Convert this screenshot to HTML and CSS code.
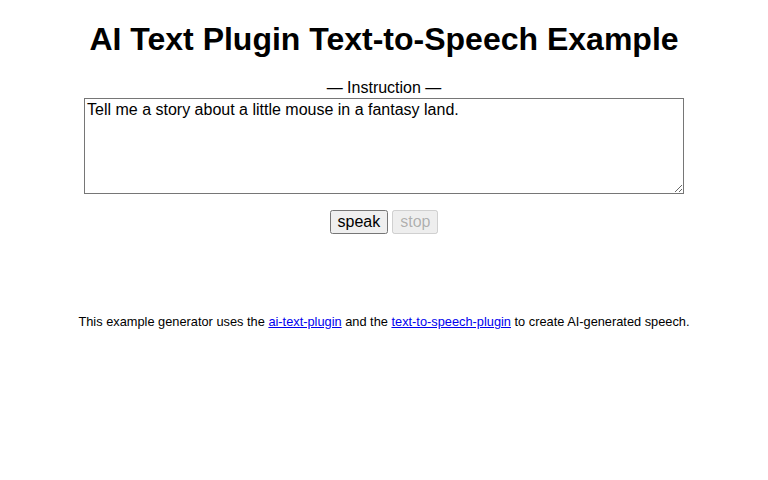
FILE: index.html
```html
<!doctype html>
<html lang="en">
<head>
	<meta charset="UTF-8">
	<title>AI Text Plugin Text-to-Speech Example</title>
	<link rel="stylesheet" href="styles.css">
</head>
<body>
	<h1 class="title">AI Text Plugin Text-to-Speech Example</h1>
	<div class="instruction">
		<div class="label">— Instruction —</div>
		<textarea id="instruction">Tell me a story about a little mouse in a fantasy land.</textarea>
	</div>
	<div class="buttons">
		<button id="speak">speak</button>
		<button id="stop" disabled>stop</button>
	</div>
	<p class="note">This example generator uses the <a href="#">ai-text-plugin</a> and the <a href="#">text-to-speech-plugin</a> to create AI-generated speech.</p>
</body>
</html>
```
FILE: styles.css
```css
body {
  font-family: "Liberation Sans", Arial, sans-serif;
  text-align: center;
  color: #000;
  background: #fff;
  margin: 0 8px;
}

h1.title {
  font-size: 32px;
  font-weight: bold;
  margin: 21px 0;
}

.instruction .label {
  font-size: 16px;
  line-height: 18px;
}

#instruction {
  display: block;
  box-sizing: border-box;
  width: 600px;
  height: 96px;
  margin: 1px auto 0;
  padding: 2px;
  font: 16px "Liberation Sans", Arial, sans-serif;
  border: 1px solid #767676;
}

.buttons {
  display: flex;
  justify-content: center;
  gap: 4px;
  margin-top: 16px;
}

.buttons button {
  font: 16px "Liberation Sans", Arial, sans-serif;
  height: 24px;
  padding: 1px 6px;
}

p.note {
  font-size: 12.8px;
  margin-top: 80px;
}

a {
  color: #0000ee;
}
```
